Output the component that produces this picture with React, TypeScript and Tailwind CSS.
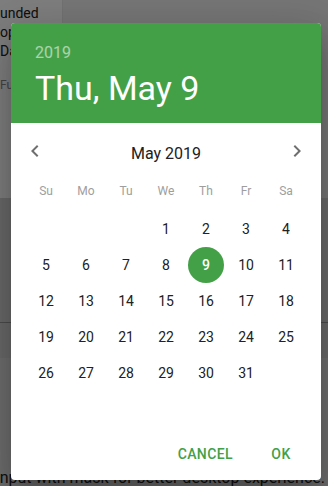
import React from "react";

const weekDays = ["Su", "Mo", "Tu", "We", "Th", "Fr", "Sa"];

// May 2019 starts on a Wednesday
const leading = 3;
const daysInMonth = 31;
const selectedDay = 9;

function ChevronLeft() {
  return (
    <svg width="24" height="24" viewBox="0 0 24 24" fill="#6f6f6f">
      <path d="M15.41 7.41L14 6l-6 6 6 6 1.41-1.41L10.83 12z" />
    </svg>
  );
}

function ChevronRight() {
  return (
    <svg width="24" height="24" viewBox="0 0 24 24" fill="#6f6f6f">
      <path d="M8.59 16.59L13.17 12 8.59 7.41 10 6l6 6-6 6-1.41-1.41z" />
    </svg>
  );
}

function Backdrop() {
  return (
    <div className="flex h-[486px] flex-col overflow-hidden text-[#222]">
      <div className="flex h-[198px] bg-[#ececec]">
        <div className="w-[63px] overflow-hidden border-r border-[#e4e4e4] bg-[#fdfdfd] pt-[4px] text-[14px] leading-[19px]">
          <div className="whitespace-nowrap">unded</div>
          <div className="whitespace-nowrap">opt</div>
          <div className="whitespace-nowrap">Date</div>
          <div className="mt-[15px] whitespace-nowrap text-[12px] text-[#888]">Full</div>
        </div>
        <div className="flex-1" />
      </div>
      <div className="flex h-[160px] flex-col bg-[#d2d2d2]">
        <div className="h-[124px]" />
        <div className="h-px bg-[#999]" />
      </div>
      <div className="flex flex-1 flex-col justify-end bg-[#dcdcdc]">
        <div className="-mb-[4px] flex justify-end pr-[3px]">
          <span className="whitespace-nowrap text-[16px] leading-[24px]">
            Use keyboard input with mask for better desktop experience.
          </span>
        </div>
      </div>
    </div>
  );
}

export default function App() {
  const cells: (number | null)[] = [
    ...Array.from({ length: leading }, () => null),
    ...Array.from({ length: daysInMonth }, (_, i) => i + 1),
  ];

  return (
    <div
      className="relative h-[486px] w-[328px] overflow-hidden"
      style={{ fontFamily: "Roboto, 'Liberation Sans', sans-serif" }}
    >
      <Backdrop />
      <div className="absolute inset-0 bg-black/50" />

      <div className="absolute left-[11px] top-[23px] w-[310px] overflow-hidden rounded-[4px] bg-white shadow-[0_11px_15px_-7px_rgba(0,0,0,0.2),0_24px_38px_3px_rgba(0,0,0,0.14),0_9px_46px_8px_rgba(0,0,0,0.12)]">
        <div className="h-[100px] bg-[#43a047] pl-[24px] pt-[20px]">
          <div className="text-[16px] leading-[20px] text-white/55">2019</div>
          <div className="mt-[5px] text-[34px] leading-[40px] text-white">Thu, May 9</div>
        </div>

        <div className="mt-[4px] flex h-[48px] items-center justify-between">
          <button className="flex h-[48px] w-[48px] items-center justify-center">
            <ChevronLeft />
          </button>
          <span className="pt-[5px] text-[16px] leading-[24px] text-[#212121]">May 2019</span>
          <button className="flex h-[48px] w-[48px] items-center justify-center">
            <ChevronRight />
          </button>
        </div>

        <div className="mx-auto mt-[8px] grid w-[280px] grid-cols-7">
          {weekDays.map((d) => (
            <div key={d} className="text-center text-[12px] leading-[16px] text-[#9e9e9e]">
              {d}
            </div>
          ))}
        </div>

        <div className="mx-auto mt-[12px] grid h-[216px] w-[280px] grid-cols-7 content-start">
          {cells.map((day, i) => (
            <div key={i} className="flex h-[36px] items-center justify-center">
              {day !== null && (
                <div
                  className={
                    day === selectedDay
                      ? "flex h-[36px] w-[36px] items-center justify-center rounded-full bg-[#43a047] text-[14px] font-medium text-white"
                      : "flex h-[36px] w-[36px] items-center justify-center text-[14px] text-[#212121]"
                  }
                >
                  {day}
                </div>
              )}
            </div>
          ))}
        </div>

        <div className="mb-[8px] mr-[8px] mt-[9px] flex justify-end">
          <button className="h-[36px] min-w-[64px] px-[16px] text-[14px] font-medium uppercase tracking-[0.4px] text-[#43a047]">
            Cancel
          </button>
          <button className="h-[36px] min-w-[64px] px-[16px] text-[14px] font-medium uppercase tracking-[0.4px] text-[#43a047]">
            OK
          </button>
        </div>
      </div>
    </div>
  );
}
